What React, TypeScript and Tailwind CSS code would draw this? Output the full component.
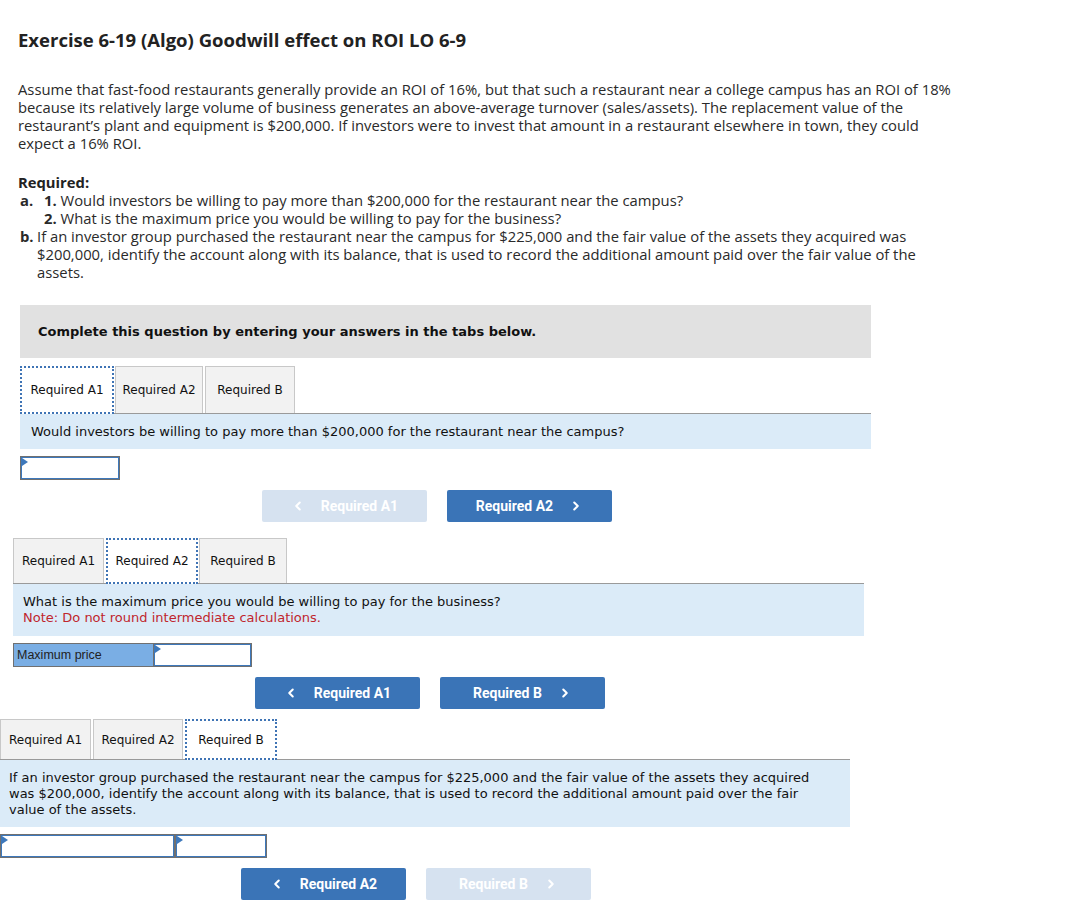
import React from "react";
import { ChevronLeft, ChevronRight } from "lucide-react";

const body = { fontFamily: "'Open Sans', Lato, Arial, sans-serif" };
const verd = { fontFamily: "'DejaVu Sans', Verdana, sans-serif" };
const rob = { fontFamily: "Roboto, Arial, sans-serif" };

function Tabs({ active, widths, h }: { active: number; widths: number[]; h: number }) {
  const names = ["Required A1", "Required A2", "Required B"];
  return (
    <div className="flex items-stretch border-b border-[#9a9a9a]" style={{ ...verd, height: h }}>
      {names.map((n, i) =>
        i === active ? (
          <div
            key={n}
            className="flex items-center justify-center bg-white border-2 border-dotted border-[#3f74b5] -mb-px mr-[1px] text-[12px] text-[#111]"
            style={{ width: widths[i] }}
          >
            {n}
          </div>
        ) : (
          <div
            key={n}
            className="flex items-center justify-center bg-[#f2f2f2] border border-b-0 border-[#c8c8c8] mr-[2px] text-[12px] text-[#111]"
            style={{ width: widths[i] }}
          >
            {n}
          </div>
        )
      )}
    </div>
  );
}

function Box({ w }: { w: number }) {
  return (
    <div className="h-[24px] border border-[#707070]" style={{ width: w }}>
      <div className="relative h-full border border-[#3d78bb] bg-white">
        <div className="absolute left-0 top-0 w-0 h-0 border-l-[6px] border-l-[#3d78bb] border-y-[4px] border-y-transparent" />
      </div>
    </div>
  );
}

function NavBtn({ label, dir, disabled }: { label: string; dir: "l" | "r"; disabled?: boolean }) {
  return (
    <div
      className={`w-[165px] h-[32px] rounded-[2px] flex items-center justify-center gap-[16px] text-[14px] font-bold text-white ${
        disabled ? "bg-[#d6e2f0]" : "bg-[#3a74b7]"
      }`}
      style={rob}
    >
      {dir === "l" && <ChevronLeft size={14} strokeWidth={3.5} />}
      <span>{label}</span>
      {dir === "r" && <ChevronRight size={14} strokeWidth={3.5} />}
    </div>
  );
}

export default function App() {
  return (
    <div className="w-[1077px] min-h-[919px] bg-white text-[#2a2a2a]">
      <div className="px-[18px] pt-[29px]" style={body}>
        <h1 className="text-[18.5px] font-bold text-[#222] leading-[22px]">
          Exercise 6-19 (Algo) Goodwill effect on ROI LO 6-9
        </h1>
        <p className="mt-[29px] text-[14.8px] leading-[18px] w-[1000px] whitespace-nowrap">
          Assume that fast-food restaurants generally provide an ROI of 16%, but that such a restaurant near a college campus has an ROI of 18%
          <br />
          because its relatively large volume of business generates an above-average turnover (sales/assets). The replacement value of the
          <br />
          restaurant’s plant and equipment is $200,000. If investors were to invest that amount in a restaurant elsewhere in town, they could
          <br />
          expect a 16% ROI.
        </p>
        <div className="mt-[21px] text-[14.8px] leading-[18px] whitespace-nowrap">
          <div className="font-bold text-[#222]">Required:</div>
          <div className="flex pl-[2px]">
            <span className="w-[24px] font-bold">a.</span>
            <div>
              <div>
                <b>1.</b> Would investors be willing to pay more than $200,000 for the restaurant near the campus?
              </div>
              <div>
                <b>2.</b> What is the maximum price you would be willing to pay for the business?
              </div>
            </div>
          </div>
          <div className="flex pl-[2px]">
            <span className="w-[17px] shrink-0 font-bold">b.</span>
            <div>
              If an investor group purchased the restaurant near the campus for $225,000 and the fair value of the assets they acquired was
              <br />
              $200,000, identify the account along with its balance, that is used to record the additional amount paid over the fair value of the
              <br />
              assets.
            </div>
          </div>
        </div>
      </div>

      {/* Section 1 */}
      <div className="ml-[20px] w-[851px] mt-[24px]">
        <div className="h-[53px] bg-[#e1e1e1] flex items-center pl-[18px] text-[13px] font-bold text-[#111]" style={verd}>
          Complete this question by entering your answers in the tabs below.
        </div>
        <div className="mt-[8px]">
          <Tabs active={0} widths={[94, 88, 90]} h={48} />
        </div>
        <div className="bg-[#dbebf8] h-[35px] flex items-center pl-[11px] text-[13px] text-[#111]" style={verd}>
          Would investors be willing to pay more than $200,000 for the restaurant near the campus?
        </div>
        <div className="mt-[7px]">
          <Box w={100} />
        </div>
        <div className="mt-[10px] ml-[242px] flex gap-[20px]">
          <NavBtn label="Required A1" dir="l" disabled />
          <NavBtn label="Required A2" dir="r" />
        </div>
      </div>

      {/* Section 2 */}
      <div className="ml-[13px] w-[851px] mt-[16px]">
        <Tabs active={1} widths={[91, 92, 88]} h={46} />
        <div className="bg-[#dbebf8] h-[52px] pt-[10px] pl-[10px] text-[13px] leading-[16px]" style={verd}>
          <div className="text-[#111]">What is the maximum price you would be willing to pay for the business?</div>
          <div className="text-[#c0262d]">Note: Do not round intermediate calculations.</div>
        </div>
        <div className="mt-[7px] flex">
          <div
            className="w-[140px] h-[24px] bg-[#7aaee4] border border-[#707070] border-r-0 flex items-center pl-[3px] text-[12.5px] text-[#222]"
            style={{ fontFamily: "'Liberation Sans', Arial, sans-serif" }}
          >
            Maximum price
          </div>
          <Box w={99} />
        </div>
        <div className="mt-[10px] ml-[242px] flex gap-[20px]">
          <NavBtn label="Required A1" dir="l" />
          <NavBtn label="Required B" dir="r" />
        </div>
      </div>

      {/* Section 3 */}
      <div className="w-[850px] mt-[10px]">
        <Tabs active={2} widths={[91, 90, 92]} h={41} />
        <div className="bg-[#dbebf8] h-[67px] pt-[10px] pl-[9px] text-[13px] leading-[16px] text-[#111]" style={verd}>
          If an investor group purchased the restaurant near the campus for $225,000 and the fair value of the assets they acquired
          <br />
          was $200,000, identify the account along with its balance, that is used to record the additional amount paid over the fair
          <br />
          value of the assets.
        </div>
        <div className="mt-[7px] flex">
          <Box w={175} />
          <Box w={92} />
        </div>
        <div className="mt-[10px] ml-[241px] flex gap-[20px] pb-[20px]">
          <NavBtn label="Required A2" dir="l" />
          <NavBtn label="Required B" dir="r" disabled />
        </div>
      </div>
    </div>
  );
}
